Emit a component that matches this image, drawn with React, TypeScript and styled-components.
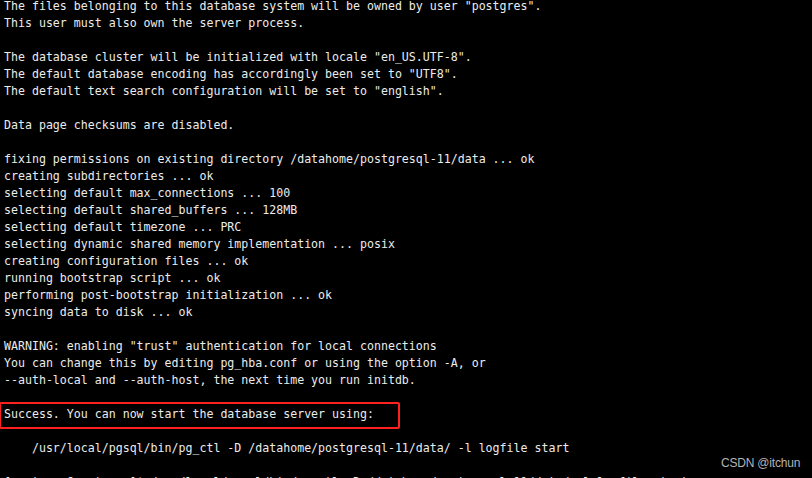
import React from "react";
import styled, { createGlobalStyle } from "styled-components";

const Global = createGlobalStyle`
  html, body { margin: 0; padding: 0; background: #000; }
  #root { width: 812px; height: 478px; }
`;

const Screen = styled.div`
  position: relative;
  width: 812px;
  height: 478px;
  overflow: hidden;
  background: #000;
`;

const Output = styled.pre`
  margin: -2.5px 0 0 4px;
  font-family: "DejaVu Sans Mono", "Liberation Mono", monospace;
  font-size: 11.6px;
  line-height: 17px;
  color: #ececec;
  white-space: pre;
`;

const Line = styled.div`
  height: 17px;
`;

const Highlight = styled.div`
  position: absolute;
  left: -1px;
  top: 402px;
  width: 397px;
  height: 23px;
  border: 2px solid #ff2020;
  border-radius: 2px;
`;

const Watermark = styled.div`
  position: absolute;
  left: 721px;
  top: 456px;
  font-family: "Liberation Sans", Arial, sans-serif;
  font-size: 12px;
  color: #b4b4b4;
  letter-spacing: -0.2px;
`;

const lines = [
  'The files belonging to this database system will be owned by user "postgres".',
  "This user must also own the server process.",
  "",
  'The database cluster will be initialized with locale "en_US.UTF-8".',
  'The default database encoding has accordingly been set to "UTF8".',
  'The default text search configuration will be set to "english".',
  "",
  "Data page checksums are disabled.",
  "",
  "fixing permissions on existing directory /datahome/postgresql-11/data ... ok",
  "creating subdirectories ... ok",
  "selecting default max_connections ... 100",
  "selecting default shared_buffers ... 128MB",
  "selecting default timezone ... PRC",
  "selecting dynamic shared memory implementation ... posix",
  "creating configuration files ... ok",
  "running bootstrap script ... ok",
  "performing post-bootstrap initialization ... ok",
  "syncing data to disk ... ok",
  "",
  'WARNING: enabling "trust" authentication for local connections',
  "You can change this by editing pg_hba.conf or using the option -A, or",
  "--auth-local and --auth-host, the next time you run initdb.",
  "",
  "Success. You can now start the database server using:",
  "",
  "    /usr/local/pgsql/bin/pg_ctl -D /datahome/postgresql-11/data/ -l logfile start",
  "",
  "[postgres@centos ~]$ /usr/local/pgsql/bin/pg_ctl -D /datahome/postgresql-11/data/ -l logfile start",
];

export default function App() {
  return (
    <>
      <Global />
      <Screen>
        <Output>
          {lines.map((l, i) => (
            <Line key={i}>{l}</Line>
          ))}
        </Output>
        <Highlight />
        <Watermark>CSDN @itchun</Watermark>
      </Screen>
    </>
  );
}
